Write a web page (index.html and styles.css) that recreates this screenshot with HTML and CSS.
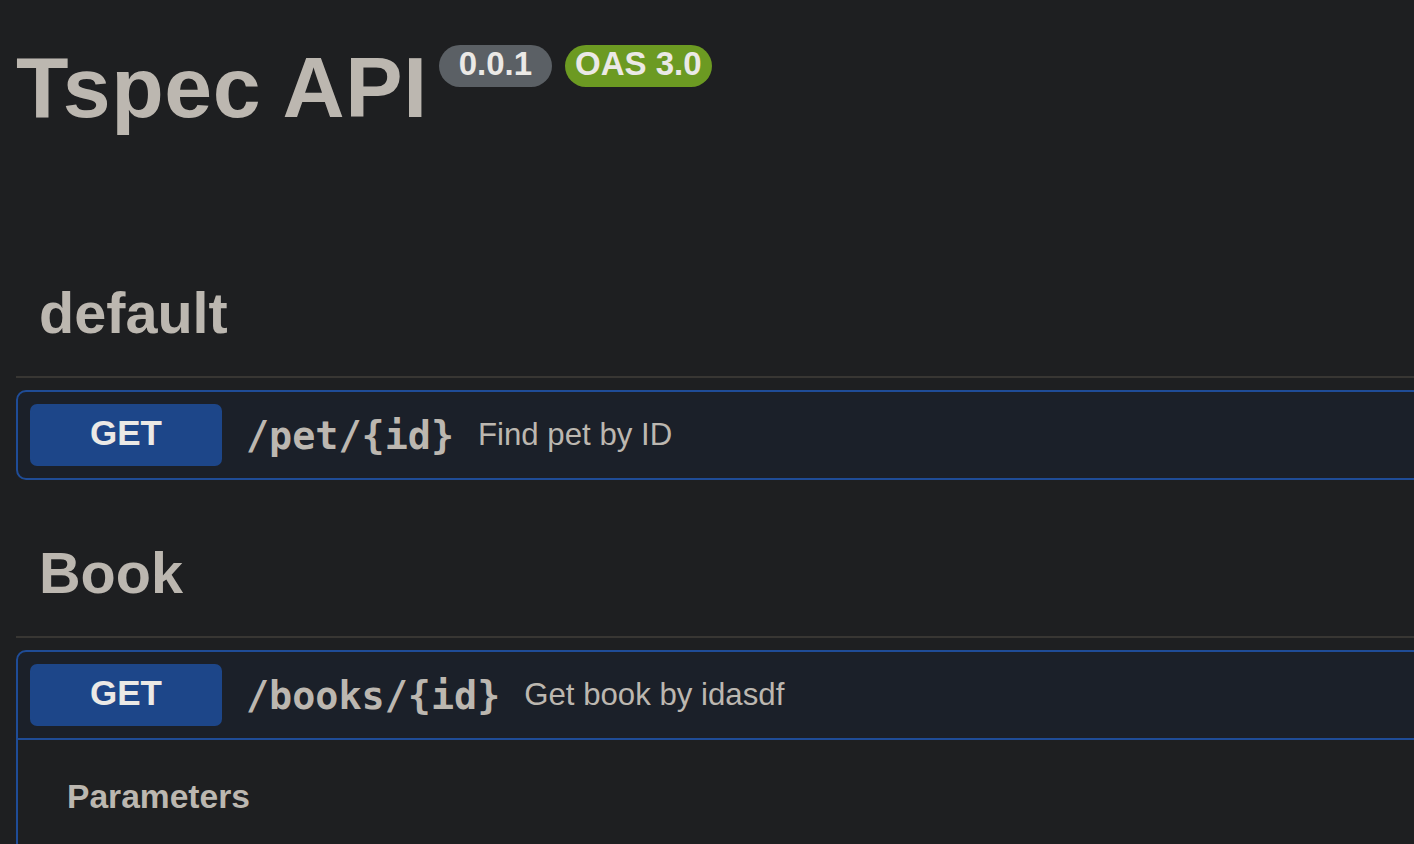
FILE: index.html
```html
<!DOCTYPE html>
<html lang="en">
<head>
  <meta charset="UTF-8" />
  <title>Tspec API</title>
  <link rel="stylesheet" href="styles.css">
</head>
<body>

<div class="swagger-ui">

  <!-- info header -->
  <div class="info">
    <h2 class="title">
      <span class="title-text">Tspec API</span>
      <span class="badge badge-version">0.0.1</span>
      <span class="badge badge-oas">OAS 3.0</span>
    </h2>
  </div>

  <!-- default tag -->
  <section class="tag-section">
    <h3 class="opblock-tag">default</h3>
    <div class="opblock opblock-get">
      <div class="opblock-summary">
        <span class="method">GET</span>
        <span class="path">/pet/{id}</span>
        <span class="description">Find pet by ID</span>
      </div>
    </div>
  </section>

  <!-- Book tag -->
  <section class="tag-section">
    <h3 class="opblock-tag">Book</h3>
    <div class="opblock opblock-get is-open">
      <div class="opblock-summary">
        <span class="method">GET</span>
        <span class="path">/books/{id}</span>
        <span class="description">Get book by idasdf</span>
      </div>
      <div class="opblock-body">
        <h4 class="section-title">Parameters</h4>
      </div>
    </div>
  </section>

</div>

</body>
</html>
```

FILE: styles.css
```css
html, body {
  margin: 0;
  padding: 0;
  overflow: hidden;
  background: #1e1f21;
}

body {
  font-family: "Liberation Sans", Arial, sans-serif;
  color: #bcb7b0;
}

/* content runs past the right edge of the window */
.swagger-ui {
  width: 1700px;
  padding: 44px 0 0 16px;
}

/* header */
.title {
  display: flex;
  align-items: flex-start;
  margin: 0;
  font-size: 86px;
  line-height: 86px;
  font-weight: 700;
  color: #bcb7b0;
}

.title-text {
  letter-spacing: 0.6px;
}

.badge {
  margin-top: 1px;
  margin-left: 11px;
  height: 42px;
  padding-bottom: 4px;
  box-sizing: border-box;
  border-radius: 21px;
  font-size: 33px;
  line-height: 38px;
  font-weight: 700;
  color: #ebe9e6;
}

.badge + .badge {
  margin-left: 13px;
}

.badge-version {
  padding-left: 20px;
  padding-right: 20px;
  background: #5b6065;
}

.badge-oas {
  padding-left: 10px;
  padding-right: 10px;
  background: #6c9a22;
}

/* tag sections */
.tag-section {
  margin-top: 154px;
}

.tag-section + .tag-section {
  margin-top: 64px;
}

.opblock-tag {
  margin: 0;
  padding: 0 0 34px 23px;
  font-size: 57.6px;
  line-height: 58px;
  font-weight: 700;
  border-bottom: 2px solid #383633;
}

/* operation blocks */
.opblock {
  margin-top: 12px;
  border: 2px solid #1f4c97;
  border-radius: 10px;
  background: #1b2029;
}

.opblock-summary {
  display: flex;
  align-items: center;
  padding: 12px;
}

.is-open .opblock-summary {
  border-bottom: 2px solid #1f4c97;
}

.method {
  width: 192px;
  height: 62px;
  padding-bottom: 5px;
  box-sizing: border-box;
  flex-shrink: 0;
  display: flex;
  align-items: center;
  justify-content: center;
  border-radius: 7px;
  background: #1d4689;
  color: #ebe9e6;
  font-size: 35px;
  font-weight: 700;
}

.path {
  padding: 0 24px;
  font-family: "DejaVu Sans Mono", "Liberation Mono", monospace;
  font-size: 38.4px;
  font-weight: 700;
  color: #bcb7b0;
}

.description {
  font-size: 31.2px;
  color: #bcb7b0;
}

.opblock-body {
  height: 200px;
  padding: 40px 0 0 49px;
  background: #1e1f21;
  border-radius: 0 0 10px 10px;
}

.section-title {
  margin: 0;
  font-size: 33.6px;
  line-height: 34px;
  font-weight: 700;
  color: #bcb7b0;
}
```
